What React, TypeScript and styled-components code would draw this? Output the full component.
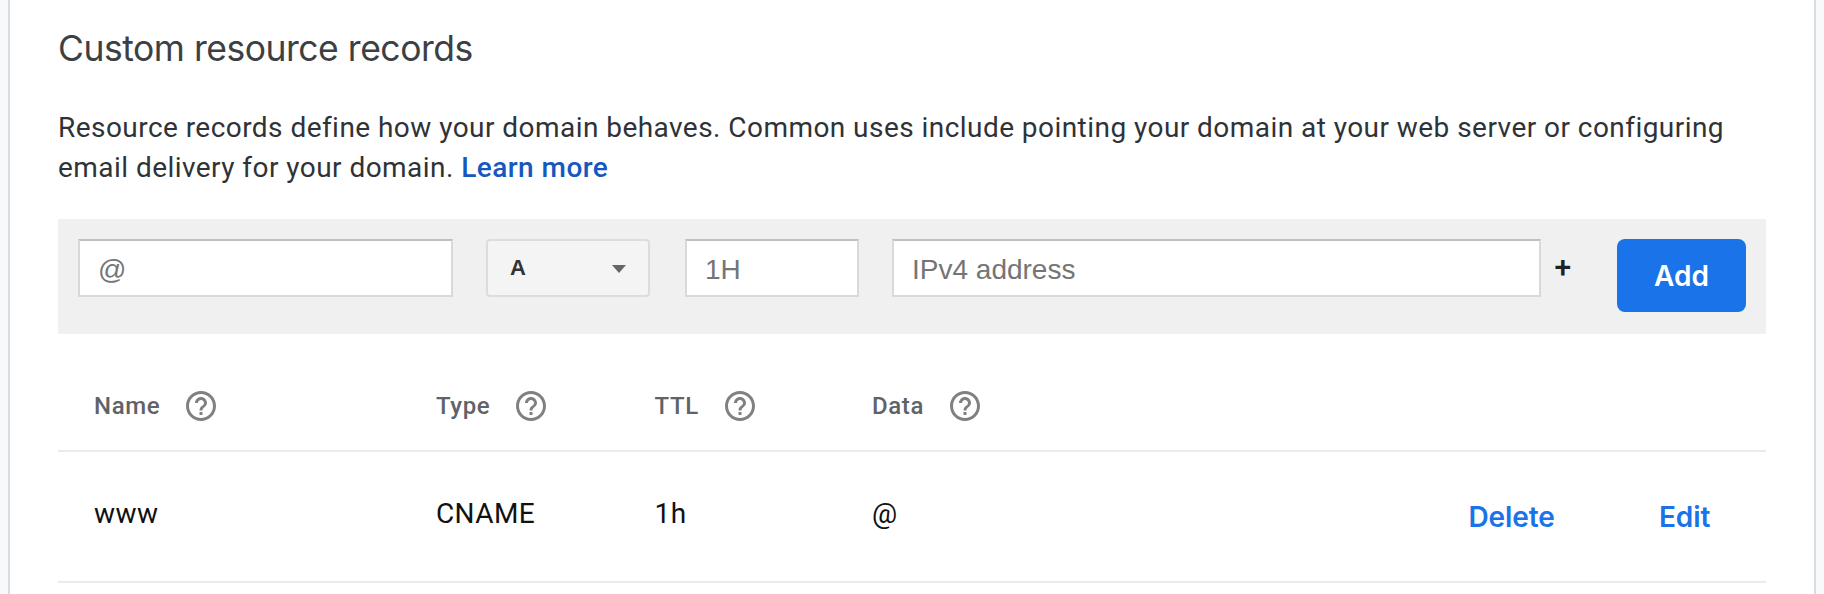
import React from "react";
import styled, { createGlobalStyle } from "styled-components";
import { MdHelpOutline } from "react-icons/md";

const GlobalStyle = createGlobalStyle`
  * { box-sizing: border-box; }
  body {
    margin: 0;
    background: #f8f9fa;
    font-family: Roboto, sans-serif;
  }
`;

const Page = styled.div`
  height: 594px;
  padding: 0 8px;
  overflow: hidden;
`;

const Card = styled.section`
  height: 594px;
  padding: 29px 48px 0;
  background: #fff;
  border: solid #dadce0;
  border-width: 0 2px;
`;

const Title = styled.h1`
  margin: 0;
  font: 400 35.5px/40px Inter, sans-serif;
  letter-spacing: -0.48px;
  color: #3c4043;
`;

const Description = styled.p`
  margin: 39px 0 0;
  font-size: 28px;
  line-height: 40px;
  letter-spacing: 0.45px;
  color: #2f3337;
  white-space: nowrap;
`;

const LearnMore = styled.a`
  font-weight: 500;
  color: #1558c0;
`;

const AddBar = styled.form`
  display: flex;
  align-items: flex-start;
  height: 115px;
  margin-top: 31px;
  padding: 20px 20px 0;
  background: #f0f0f0;
`;

const Field = styled.input<{ $width: number; $gap: number }>`
  flex: none;
  width: ${(p) => p.$width}px;
  height: 58px;
  margin: 0 ${(p) => p.$gap}px 0 0;
  padding: 4px 18px 0;
  border: 2px solid #d9d9d9;
  border-top-color: #c0c0c0;
  border-radius: 0;
  background: #fff;
  font: 28px "Liberation Sans", Arial, sans-serif;
  &::placeholder { color: #757575; opacity: 1; }
`;

const TypeSelect = styled.div`
  display: flex;
  align-items: center;
  justify-content: space-between;
  flex: none;
  width: 164px;
  height: 58px;
  margin-right: 35px;
  padding: 0 22px 1px;
  border: 2px solid #dcdcdc;
  border-radius: 4px;
  background: #f4f4f4;
  color: #333;
  font: 700 22px "Liberation Sans", Arial, sans-serif;
`;

const Caret = styled.span`
  margin-top: 3px;
  border: 7.5px solid transparent;
  border-top: 8px solid #666;
  border-bottom: 0;
`;

const Plus = styled.span`
  flex: none;
  width: 76px;
  padding-left: 13.5px;
  font: 500 30px/56px Roboto, sans-serif;
  color: #202124;
`;

const AddButton = styled.button`
  flex: none;
  width: 129px;
  height: 73px;
  padding: 0;
  border: 0;
  border-radius: 8px;
  background: #1a73e8;
  color: #fff;
  font: 600 28px Inter, sans-serif;
`;

const Row = styled.div<{ $height: number; $line: string }>`
  display: grid;
  grid-template-columns: 342px 218.5px 217.5px 596.5px 190.5px 1fr;
  align-items: center;
  height: ${(p) => p.$height}px;
  padding-left: 36px;
  border-bottom: 2px solid ${(p) => p.$line};
`;

const Heading = styled.div`
  display: flex;
  align-items: center;
  gap: 23px;
  padding-top: 28px;
  color: #5f6368;
  font-weight: 500;
  font-size: 24px;
  letter-spacing: 0.6px;
`;

const HelpIcon = styled(MdHelpOutline)`
  width: 36px;
  height: 36px;
  color: #808080;
`;

const Cell = styled.div`
  padding-bottom: 6px;
  color: #111;
  font-size: 28px;
  letter-spacing: 0.4px;
`;

const Action = styled.a`
  color: #1a73e8;
  font: 600 28px Inter, sans-serif;
  letter-spacing: -0.1px;
`;

const headings = ["Name", "Type", "TTL", "Data"];
const record = ["www", "CNAME", "1h", "@"];

export default function App() {
  return (
    <Page>
      <GlobalStyle />
      <Card>
        <Title>Custom resource records</Title>
        <Description>
          Resource records define how your domain behaves. Common uses include pointing your domain at your web server or configuring
          <br />
          email delivery for your domain. <LearnMore>Learn more</LearnMore>
        </Description>
        <AddBar>
          <Field $width={375} $gap={33} placeholder="@" />
          <TypeSelect>
            A
            <Caret />
          </TypeSelect>
          <Field $width={174} $gap={33} placeholder="1H" />
          <Field $width={649} $gap={0} placeholder="IPv4 address" />
          <Plus>+</Plus>
          <AddButton type="button">Add</AddButton>
        </AddBar>
        <Row $height={118} $line="#ebebeb">
          {headings.map((label) => (
            <Heading key={label}>
              {label}
              <HelpIcon />
            </Heading>
          ))}
        </Row>
        <Row $height={131} $line="#ebebeb">
          {record.map((value) => (
            <Cell key={value}>{value}</Cell>
          ))}
          <Action>Delete</Action>
          <Action>Edit</Action>
        </Row>
      </Card>
    </Page>
  );
}
